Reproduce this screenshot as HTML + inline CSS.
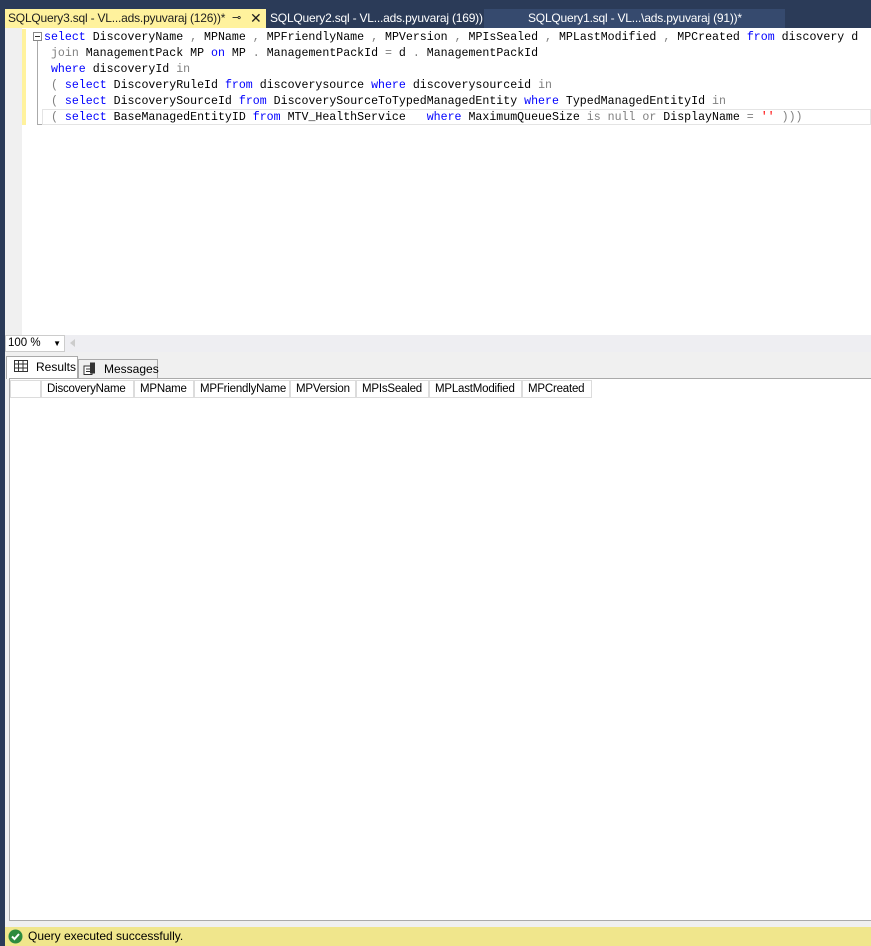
<!DOCTYPE html>
<html><head><style>
*{margin:0;padding:0;box-sizing:border-box}
body{width:871px;height:946px;overflow:hidden;background:#2b3b58;font-family:"Liberation Sans",sans-serif;position:relative}
.abs{position:absolute}
.tab{position:absolute;top:9px;height:19px;font-size:12px;line-height:19px;white-space:nowrap;letter-spacing:-0.2px}
.code{position:absolute;left:0;font-family:"Liberation Mono",monospace;font-size:11.6px;line-height:16px;white-space:pre;color:#000}
.k{color:#0000ff}.g{color:#808080}.r{color:#ff0000}
.hd{position:absolute;top:380px;height:18px;border:1px solid #dcdcdc;background:#fff;font-size:11.5px;line-height:16px;padding-left:5px;letter-spacing:-0.2px;color:#000}
</style></head><body>
<div class="abs" style="left:0;top:0;width:871px;height:8px;background:#2b3b58"></div>
<div class="tab" style="left:5px;width:261px;background:#fff29d;color:#1e1e1e;padding-left:3px">SQLQuery3.sql - VL...ads.pyuvaraj (126))*<span style="position:absolute;left:227px;font-size:11px">⊸</span><span style="position:absolute;left:245px;font-size:14px">✕</span></div>
<div class="tab" style="left:266px;width:218px;color:#fff;padding-left:4px">SQLQuery2.sql - VL...ads.pyuvaraj (169))</div>
<div class="tab" style="left:484px;width:301px;background:#364a6e;color:#fff;padding-left:44px">SQLQuery1.sql - VL...\ads.pyuvaraj (91))*</div>
<div class="abs" style="left:5px;top:28px;width:866px;height:307px;background:#fff"></div>
<div class="abs" style="left:5px;top:28px;width:17px;height:307px;background:#f0f0f0"></div>
<div class="abs" style="left:22px;top:29px;width:4px;height:96px;background:#fff29d"></div>
<div class="abs" style="left:33px;top:32px;width:9px;height:9px;border:1px solid #888;background:#fff"><div style="position:absolute;left:1px;top:3px;width:5px;height:1px;background:#333"></div></div>
<div class="abs" style="left:37px;top:41px;width:1px;height:84px;background:#aaa"></div>
<div class="abs" style="left:37px;top:124px;width:6px;height:1px;background:#aaa"></div>
<div class="abs" style="left:42px;top:109px;width:829px;height:16px;border:1px solid #e4e4e4"></div>
<div class="abs" style="left:44px;top:30px;width:827px;height:100px">
<div class="code" style="top:0"><span class="k">select</span> DiscoveryName <span class="g">,</span> MPName <span class="g">,</span> MPFriendlyName <span class="g">,</span> MPVersion <span class="g">,</span> MPIsSealed <span class="g">,</span> MPLastModified <span class="g">,</span> MPCreated <span class="k">from</span> discovery d</div>
<div class="code" style="top:16px"> <span class="g">join</span> ManagementPack MP <span class="k">on</span> MP <span class="g">.</span> ManagementPackId <span class="g">=</span> d <span class="g">.</span> ManagementPackId</div>
<div class="code" style="top:32px"> <span class="k">where</span> discoveryId <span class="g">in</span></div>
<div class="code" style="top:48px"> <span class="g">(</span> <span class="k">select</span> DiscoveryRuleId <span class="k">from</span> discoverysource <span class="k">where</span> discoverysourceid <span class="g">in</span></div>
<div class="code" style="top:64px"> <span class="g">(</span> <span class="k">select</span> DiscoverySourceId <span class="k">from</span> DiscoverySourceToTypedManagedEntity <span class="k">where</span> TypedManagedEntityId <span class="g">in</span></div>
<div class="code" style="top:80px"> <span class="g">(</span> <span class="k">select</span> BaseManagedEntityID <span class="k">from</span> MTV_HealthService   <span class="k">where</span> MaximumQueueSize <span class="g">is null or</span> DisplayName <span class="g">=</span> <span class="r">''</span> <span class="g">)))</span></div>
</div>
<div class="abs" style="left:5px;top:335px;width:866px;height:17px;background:#eeeef2"></div>
<div class="abs" style="left:5px;top:335px;width:60px;height:17px;background:#fff;border:1px solid #ccc;font-size:11.5px;line-height:15px;padding-left:2px">100 %<span style="position:absolute;right:3px;top:0;font-size:8px">▼</span></div>
<div class="abs" style="left:70px;top:339px;width:0;height:0;border-top:4px solid transparent;border-bottom:4px solid transparent;border-right:5px solid #ccc"></div>
<div class="abs" style="left:5px;top:352px;width:866px;height:575px;background:#f0f0f0"></div>
<div class="abs" style="left:6px;top:356px;width:72px;height:23px;background:#fff;border:1px solid #aaa;border-bottom:none;font-size:12px;line-height:21px;padding-left:29px">Results</div>
<svg class="abs" style="left:14px;top:360px" width="14" height="12"><rect x="0.5" y="0.5" width="13" height="11" fill="none" stroke="#333"/><path d="M0 4H14M0 8H14M4.5 0V12M9 0V12" stroke="#333"/></svg>
<div class="abs" style="left:78px;top:359px;width:80px;height:20px;background:#f0f0f0;border:1px solid #aaa;border-bottom:none;font-size:12px;line-height:19px;padding-left:25px">Messages</div>
<svg class="abs" style="left:83px;top:362px" width="14" height="13"><rect x="1" y="4" width="8" height="8.5" fill="#fff" stroke="#333"/><rect x="7" y="0.5" width="5" height="11" fill="#333"/><path d="M3 7H7M3 9.5H7" stroke="#333"/></svg>
<div class="abs" style="left:9px;top:378px;width:862px;height:543px;background:#fff;border:1px solid #aaa;border-right:none"></div>
<div class="hd" style="left:10px;width:31px"></div>
<div class="hd" style="left:41px;width:93px">DiscoveryName</div>
<div class="hd" style="left:134px;width:60px">MPName</div>
<div class="hd" style="left:194px;width:96px">MPFriendlyName</div>
<div class="hd" style="left:290px;width:66px">MPVersion</div>
<div class="hd" style="left:356px;width:73px">MPIsSealed</div>
<div class="hd" style="left:429px;width:93px">MPLastModified</div>
<div class="hd" style="left:522px;width:70px">MPCreated</div>
<div class="abs" style="left:5px;top:927px;width:866px;height:19px;background:#f0e68c;font-size:12px;line-height:19px;padding-left:23px;color:#000">Query executed successfully.</div>
<svg class="abs" style="left:8px;top:929px" width="15" height="15"><circle cx="7.5" cy="7.5" r="7" fill="#2e8b3e"/><path d="M4 7.5L6.5 10L11 5" stroke="#fff" stroke-width="2" fill="none"/></svg>
</body></html>
